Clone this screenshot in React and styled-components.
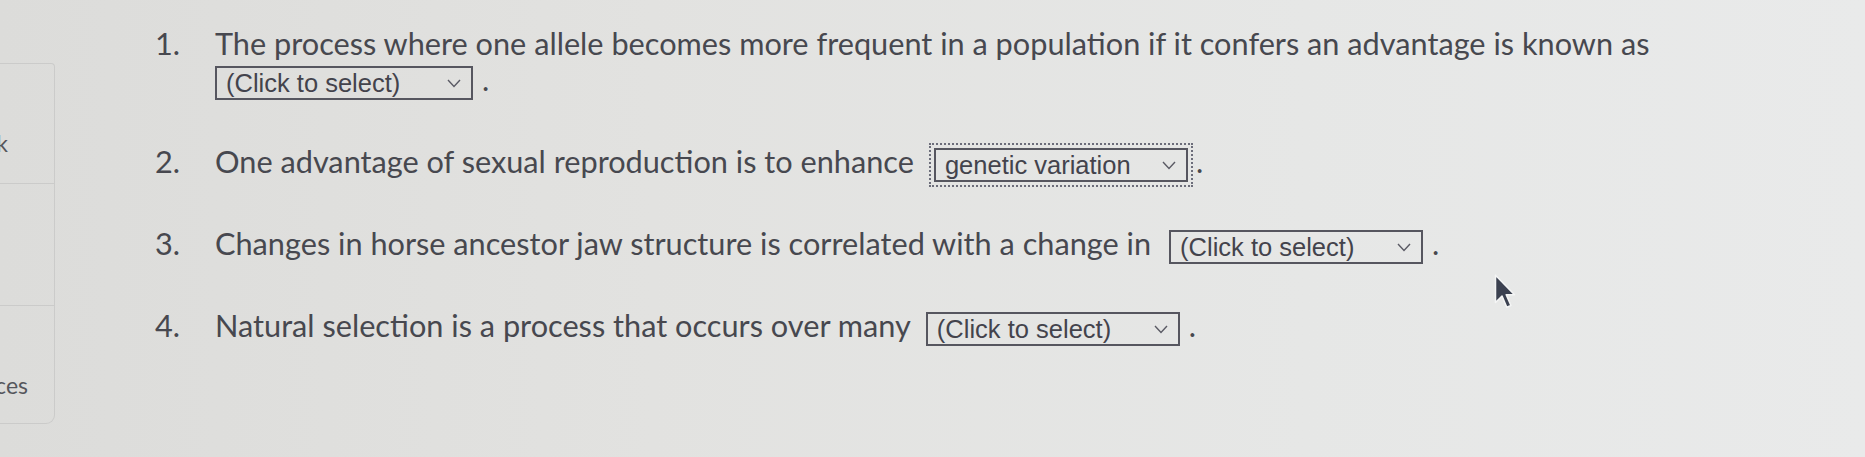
import React from "react";
import styled, { createGlobalStyle } from "styled-components";

const GlobalStyle = createGlobalStyle`
  html, body {
    margin: 0;
    padding: 0;
  }
  body {
    width: 1865px;
    height: 457px;
    overflow: hidden;
    font-family: Lato, "Open Sans", sans-serif;
    background: linear-gradient(90deg, #dcdcda 0%, #e2e2e0 35%, #e6e7e6 70%, #e9eaea 100%);
  }
`;

const Page = styled.div`
  position: relative;
  display: flex;
  width: 1865px;
  height: 457px;
`;

const Sidebar = styled.div`
  display: flex;
  flex-direction: column;
  width: 54px;
  height: 359px;
  margin-top: 63px;
  border: 1.5px solid #cbcbca;
  border-left: none;
  border-radius: 0 4px 9px 0;
  overflow: hidden;
`;

const SideCell = styled.div`
  flex: 1;
  display: flex;
  align-items: flex-end;
  justify-content: flex-end;
  padding: 0 ${(p) => p.$pr}px ${(p) => p.$pb}px 0;
  border-top: ${(p) => (p.$first ? "none" : "1.5px solid #cbcbca")};
  overflow: hidden;
  white-space: nowrap;
  font-size: 23px;
  color: #55565c;
`;

const Questions = styled.ol`
  list-style: none;
  margin: 0;
  padding: 26px 0 0 60px;
  width: 1560px;
  display: flex;
  flex-direction: column;
  gap: 46px;
`;

const Item = styled.li`
  display: flex;
  align-items: flex-start;
  font-size: 30.7px;
  line-height: 36px;
  color: #47484f;
`;

const Num = styled.span`
  flex: 0 0 100px;
  text-align: right;
  padding-right: 35px;
  box-sizing: border-box;
`;

const Text = styled.div`
  flex: 1;
`;

const Select = styled.span`
  display: inline-flex;
  align-items: center;
  justify-content: space-between;
  box-sizing: border-box;
  width: ${(p) => p.$w || 254}px;
  height: 34px;
  margin: -4px 0 -4px ${(p) => (p.$ml === undefined ? 18 : p.$ml)}px;
  padding: 0 10px 0 9px;
  border: 2px solid #56565f;
  vertical-align: middle;
  font-family: "Liberation Sans", Arial, sans-serif;
  font-size: 25.5px;
  line-height: 30px;
  color: #43434c;
  outline: ${(p) => (p.$focused ? "2.5px dotted #6c6d7a" : "none")};
  outline-offset: 3px;
`;

const Period = styled.span`
  margin-left: ${(p) => p.$gap || 9}px;
`;

const Cursor = styled.svg`
  position: absolute;
  left: 1493px;
  top: 274px;
`;

const Chevron = () => (
  <svg width="14" height="9" viewBox="0 0 14 9">
    <polyline points="1,1 7,7.5 13,1" fill="none" stroke="#5a5a64" strokeWidth="1.4" />
  </svg>
);

const Dropdown = ({ value, focused, w, ml }) => (
  <Select $focused={focused} $w={w} $ml={ml}>
    <span>{value}</span>
    <Chevron />
  </Select>
);

const App = () => {
  return (
    <>
      <GlobalStyle />
      <Page>
        <Sidebar>
          <SideCell $first $pr={46} $pb={26}>eBook</SideCell>
          <SideCell $pr={0} $pb={28} />
          <SideCell $pr={26} $pb={24}>References</SideCell>
        </Sidebar>
        <Questions>
          <Item>
            <Num>1.</Num>
            <Text>
              The process where one allele becomes more frequent in a population if it confers an advantage is known as{" "}
              <Dropdown value="(Click to select)" ml={0} w={258} />
              <Period>.</Period>
            </Text>
          </Item>
          <Item>
            <Num>2.</Num>
            <Text>
              One advantage of sexual reproduction is to enhance
              <Dropdown value="genetic variation" focused ml={20} />
              <Period $gap={8}>.</Period>
            </Text>
          </Item>
          <Item>
            <Num>3.</Num>
            <Text>
              Changes in horse ancestor jaw structure is correlated with a change in
              <Dropdown value="(Click to select)" ml={18} />
              <Period>.</Period>
            </Text>
          </Item>
          <Item>
            <Num>4.</Num>
            <Text>
              Natural selection is a process that occurs over many
              <Dropdown value="(Click to select)" ml={15} />
              <Period>.</Period>
            </Text>
          </Item>
        </Questions>
        <Cursor width="24" height="38" viewBox="0 0 20 32">
          <path
            d="M2 1 L2 24 L7.5 18.5 L11.5 28 L15 26.5 L11 17.5 L18 17.5 Z"
            fill="#3b4150"
            stroke="#f4f5f5"
            strokeWidth="1.3"
            strokeLinejoin="round"
          />
        </Cursor>
      </Page>
    </>
  );
};

export default App;
